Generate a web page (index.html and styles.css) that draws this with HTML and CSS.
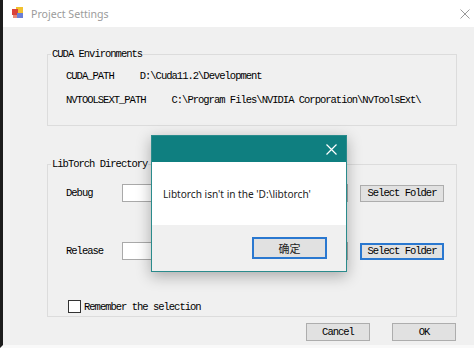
FILE: index.html
```html
<!DOCTYPE html>
<html lang="en">
<head>
<meta charset="utf-8"/>
<title>Project Settings</title>
<link rel="stylesheet" href="styles.css">
</head>
<body>
<div class="window">
  <div class="titlebar">
    <svg class="app-icon" width="12" height="12" viewBox="0 0 12 12">
      <rect x="4" y="0" width="7" height="7" fill="#f2c12e"/>
      <rect x="0" y="2" width="6" height="6" fill="#d9423a"/>
      <rect x="5" y="6" width="6" height="5" fill="#6b7fd6"/>
      <rect x="1" y="8" width="4" height="3" fill="#e58a7a"/>
    </svg>
    <span class="title">Project Settings</span>
    <svg class="title-close" width="10" height="10" viewBox="0 0 10 10">
      <path d="M0.5 0.5 L9.5 9.5 M9.5 0.5 L0.5 9.5" stroke="#9a9a9a" stroke-width="1"/>
    </svg>
  </div>

  <div class="content">
    <fieldset class="group cuda">
      <legend>CUDA Environments</legend>
      <div class="env-row"><span class="env-name">CUDA_PATH</span><span class="env-value">D:\Cuda11.2\Development</span></div>
      <div class="env-row"><span class="env-name">NVTOOLSEXT_PATH</span><span class="env-value">C:\Program Files\NVIDIA Corporation\NvToolsExt\</span></div>
    </fieldset>

    <fieldset class="group libtorch">
      <legend>LibTorch Directory</legend>
      <div class="dir-row">
        <span class="dir-label">Debug</span>
        <div class="dir-input"></div>
        <button class="btn folder">Select Folder</button>
      </div>
      <div class="dir-row">
        <span class="dir-label">Release</span>
        <div class="dir-input"></div>
        <button class="btn folder focused">Select Folder</button>
      </div>
      <label class="remember">
        <span class="checkbox"></span>Remember the selection
      </label>
    </fieldset>

    <div class="actions">
      <button class="btn action">Cancel</button>
      <button class="btn action">OK</button>
    </div>
  </div>

  <div class="msgbox">
    <div class="msg-title">
      <svg width="11" height="11" viewBox="0 0 11 11">
        <path d="M0.5 0.5 L10.5 10.5 M10.5 0.5 L0.5 10.5" stroke="#ffffff" stroke-width="1.2"/>
      </svg>
    </div>
    <div class="msg-body">Libtorch isn't in the 'D:\libtorch'</div>
    <div class="msg-footer">
      <button class="msg-ok">确定</button>
    </div>
  </div>
</div>
</body>
</html>
```

FILE: styles.css
```css
body {
  margin: 0;
  background-color: #f0f0f0;
}
.window {
  position: relative;
  height: 348px;
  box-sizing: border-box;
  border-left: 3px solid #1c1c1c;
  border-bottom: 3px solid #f9f9f9;
  background-color: #f0f0f0;
  font-family: 'Liberation Mono', monospace;
  font-size: 10.5px;
  letter-spacing: -1px;
  color: #000;
}
.titlebar {
  display: flex;
  align-items: center;
  height: 27px;
  background-color: #fff;
  padding-left: 9px;
}
.app-icon {
  margin-right: 7px;
  margin-top: -2px;
}
.title {
  font-family: 'Noto Sans', sans-serif;
  font-size: 10.6px;
  letter-spacing: 0;
  color: #9b9b9b;
}
.title-close {
  margin-left: auto;
  margin-right: 4px;
}
.content {
  padding: 21px 17px 0 44px;
}
.group {
  margin: 0;
  padding: 4px 12px 0 18px;
  border: 1px solid #dcdcdc;
}
.group legend {
  padding: 0 1px;
  margin-left: -15px;
  line-height: 12px;
}
.cuda {
  height: 78px;
  box-sizing: border-box;
}
.env-row {
  height: 24px;
  display: flex;
  align-items: center;
}
.env-value {
  margin-left: 26px;
}
.libtorch {
  margin-top: 32px;
  height: 159px;
  box-sizing: border-box;
  padding-top: 14px;
}
.dir-row {
  display: flex;
  align-items: center;
  height: 18px;
  margin-bottom: 40px;
}
.dir-label {
  width: 56px;
}
.dir-input {
  width: 226px;
  height: 18px;
  box-sizing: border-box;
  background-color: #fff;
  border: 1px solid #a9a9a9;
}
.btn {
  font-family: 'Liberation Mono', monospace;
  font-size: 10.5px;
  letter-spacing: -1px;
  color: #000;
  background-color: #e1e1e1;
  border: 1px solid #adadad;
  padding: 0;
  box-sizing: border-box;
}
.folder {
  width: 84px;
  height: 17px;
  margin-left: 12px;
}
.focused {
  border: 2px solid #2a78d0;
}
.remember {
  display: flex;
  align-items: center;
  margin-top: 1px;
  padding-left: 2px;
}
.checkbox {
  width: 11px;
  height: 11px;
  background-color: #fff;
  border: 1px solid #333;
  margin-right: 3px;
}
.actions {
  display: flex;
  justify-content: flex-end;
  gap: 22px;
  margin-top: 6px;
  padding-right: 1px;
}
.action {
  width: 64px;
  height: 18px;
}
.msgbox {
  position: absolute;
  left: 148px;
  top: 135px;
  width: 194px;
  border: 1px solid #2a8b8c;
  background-color: #fff;
  box-shadow: 0 4px 14px rgba(0, 0, 0, 0.3);
  font-family: 'Noto Sans', sans-serif;
  letter-spacing: 0;
}
.msg-title {
  display: flex;
  justify-content: flex-end;
  align-items: center;
  height: 26px;
  background-color: #0f7f80;
  padding-right: 9px;
}
.msg-body {
  height: 63px;
  display: flex;
  align-items: center;
  padding-left: 11px;
  font-size: 10.1px;
  color: #222;
}
.msg-footer {
  display: flex;
  justify-content: flex-end;
  height: 46px;
  background-color: #f0f0f0;
  padding: 12px 19px 0 0;
  box-sizing: border-box;
}
.msg-ok {
  width: 75px;
  height: 22px;
  background-color: #e1e1e1;
  border: 2px solid #2a78d0;
  font-family: 'Noto Sans CJK SC', sans-serif;
  font-size: 11px;
  color: #222;
  padding: 0;
}
```
